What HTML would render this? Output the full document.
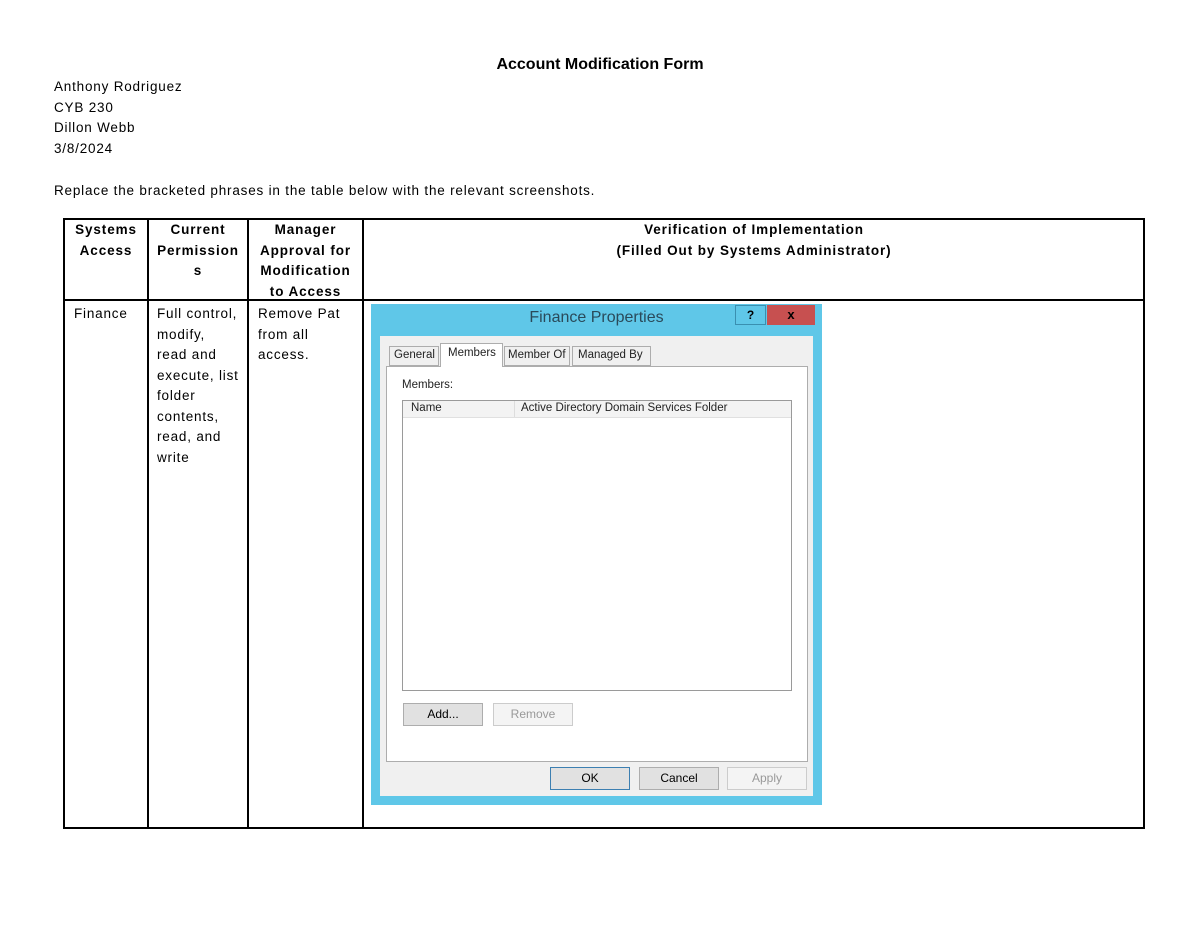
<!DOCTYPE html>
<html><head><meta charset="utf-8"><style>
body{margin:0;width:1200px;height:927px;background:#fff;position:relative;font-family:"Liberation Sans",sans-serif;color:#000;overflow:hidden}
.a{position:absolute;white-space:nowrap}
.t{font-size:13.5px;line-height:20.5px;letter-spacing:0.8px}
.b{font-weight:bold;letter-spacing:0.9px;font-size:13.5px}
.l{position:absolute;background:#000}
.c{text-align:center}
.d{font-family:"Liberation Sans",sans-serif;font-size:11.5px;color:#222;position:absolute;white-space:nowrap}
.btn{position:absolute;background:#e1e1e1;border:1px solid #adadad;box-sizing:border-box;font-size:12px;text-align:center;line-height:20px;font-family:"Liberation Sans",sans-serif}
</style></head><body>
<div class="a" style="left:0;width:1200px;top:56px;text-align:center;font-size:16px;font-weight:bold">Account Modification Form</div>
<div class="a t" style="left:54px;top:77px">Anthony Rodriguez<br>CYB 230<br>Dillon Webb<br>3/8/2024</div>
<div class="a t" style="left:54px;top:181px">Replace the bracketed phrases in the table below with the relevant screenshots.</div>
<div class="l" style="left:63px;top:218px;width:1082px;height:2px"></div>
<div class="l" style="left:63px;top:299px;width:1082px;height:2px"></div>
<div class="l" style="left:63px;top:827px;width:1082px;height:2px"></div>
<div class="l" style="left:63px;top:218px;width:2px;height:611px"></div>
<div class="l" style="left:147px;top:218px;width:2px;height:611px"></div>
<div class="l" style="left:247px;top:218px;width:2px;height:611px"></div>
<div class="l" style="left:362px;top:218px;width:2px;height:611px"></div>
<div class="l" style="left:1143px;top:218px;width:2px;height:611px"></div>
<div class="a t b c" style="left:65px;width:82px;top:220px">Systems<br>Access</div>
<div class="a t b c" style="left:149px;width:98px;top:220px">Current<br>Permission<br>s</div>
<div class="a t b c" style="left:249px;width:113px;top:220px">Manager<br>Approval for<br>Modification<br>to Access</div>
<div class="a t b c" style="left:364px;width:780px;top:220px">Verification of Implementation<br>(Filled Out by Systems Administrator)</div>
<div class="a t" style="left:74px;top:304px">Finance</div>
<div class="a t" style="left:157px;top:304px">Full control,<br>modify,<br>read and<br>execute, list<br>folder<br>contents,<br>read, and<br>write</div>
<div class="a t" style="left:258px;top:304px">Remove Pat<br>from all<br>access.</div>
<div style="position:absolute;left:371px;top:304px;width:451px;height:501px;background:#5fc7e8"></div>
<div class="d" style="left:371px;width:451px;top:309px;text-align:center;font-size:16px;color:#2a4a5a">Finance Properties</div>
<div style="position:absolute;left:735px;top:305px;width:31px;height:20px;background:#5fc7e8;border:1px solid #3a8fb0;box-sizing:border-box;font-size:12px;font-weight:bold;text-align:center;line-height:18px">?</div>
<div style="position:absolute;left:767px;top:305px;width:48px;height:20px;background:#c75050;font-size:13px;font-weight:bold;text-align:center;line-height:20px">x</div>
<div style="position:absolute;left:380px;top:336px;width:433px;height:460px;background:#f0f0f0"></div>
<div style="position:absolute;left:386px;top:366px;width:422px;height:396px;background:#fff;border:1px solid #adadad;box-sizing:border-box"></div>
<div style="position:absolute;left:389px;top:346px;width:50px;height:20px;background:#f0f0f0;border:1px solid #adadad;box-sizing:border-box"></div>
<div style="position:absolute;left:440px;top:343px;width:63px;height:24px;background:#fff;border:1px solid #adadad;border-bottom:none;box-sizing:border-box"></div>
<div style="position:absolute;left:504px;top:346px;width:66px;height:20px;background:#f0f0f0;border:1px solid #adadad;box-sizing:border-box"></div>
<div style="position:absolute;left:572px;top:346px;width:79px;height:20px;background:#f0f0f0;border:1px solid #adadad;box-sizing:border-box"></div>
<div class="d" style="left:394px;top:349px">General</div>
<div class="d" style="left:448px;top:347px">Members</div>
<div class="d" style="left:508px;top:349px">Member Of</div>
<div class="d" style="left:578px;top:349px">Managed By</div>
<div class="d" style="left:402px;top:379px">Members:</div>
<div style="position:absolute;left:402px;top:400px;width:390px;height:291px;background:#fff;border:1px solid #9a9a9a;box-sizing:border-box"></div>
<div style="position:absolute;left:403px;top:401px;width:388px;height:16px;background:#f3f3f3;border-bottom:1px solid #e0e0e0"></div>
<div style="position:absolute;left:514px;top:401px;width:1px;height:16px;background:#ddd"></div>
<div class="d" style="left:411px;top:402px">Name</div>
<div class="d" style="left:521px;top:402px">Active Directory Domain Services Folder</div>
<div class="btn" style="left:403px;top:703px;width:80px;height:23px">Add...</div>
<div class="btn" style="left:493px;top:703px;width:80px;height:23px;background:#f4f4f4;border-color:#ccc;color:#999">Remove</div>
<div class="btn" style="left:550px;top:767px;width:80px;height:23px;border-color:#3c7fb1">OK</div>
<div class="btn" style="left:639px;top:767px;width:80px;height:23px">Cancel</div>
<div class="btn" style="left:727px;top:767px;width:80px;height:23px;background:#f4f4f4;border-color:#ccc;color:#999">Apply</div>
</body></html>
